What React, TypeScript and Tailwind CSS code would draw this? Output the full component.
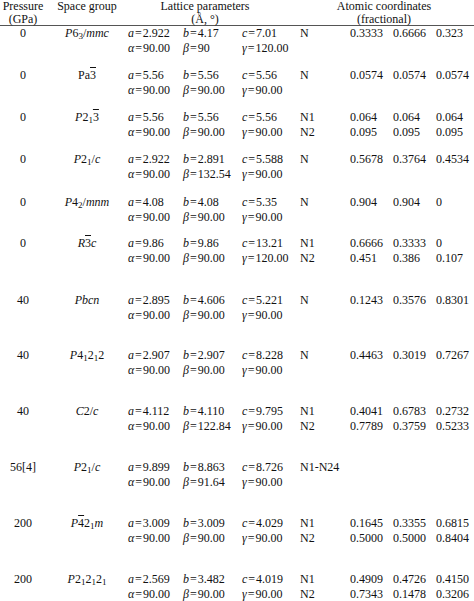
import React from "react";

type Entry = {
  gap: string;
  pressure: string;
  group: React.ReactNode;
  a: string;
  b: string;
  c: string;
  alpha: string;
  beta: string;
  gamma: string;
  atoms: { label: string; xyz?: string[] }[];
};

const I = ({ children }: { children: React.ReactNode }) => <i>{children}</i>;

// lattice parameter like a=2.922, symbol in italics
const Param = ({ sym, val }: { sym: string; val: string }) => (
  <span className="whitespace-nowrap">
    <i>{sym}</i>
    <span className="mx-[1px]">=</span>
    {val}
  </span>
);

const rows: Entry[] = [
  {
    gap: "mt-0",
    pressure: "0",
    group: (
      <>
        <I>P</I>6<sub>3</sub>/<I>mmc</I>
      </>
    ),
    a: "2.922", b: "4.17", c: "7.01",
    alpha: "90.00", beta: "90", gamma: "120.00",
    atoms: [{ label: "N", xyz: ["0.3333", "0.6666", "0.323"] }],
  },
  {
    gap: "mt-[13px]",
    pressure: "0",
    group: (
      <>
        Pa<span className="overline">3</span>
      </>
    ),
    a: "5.56", b: "5.56", c: "5.56",
    alpha: "90.00", beta: "90.00", gamma: "90.00",
    atoms: [{ label: "N", xyz: ["0.0574", "0.0574", "0.0574"] }],
  },
  {
    gap: "mt-[13px]",
    pressure: "0",
    group: (
      <>
        <I>P</I>2<sub>1</sub>
        <span className="overline">3</span>
      </>
    ),
    a: "5.56", b: "5.56", c: "5.56",
    alpha: "90.00", beta: "90.00", gamma: "90.00",
    atoms: [
      { label: "N1", xyz: ["0.064", "0.064", "0.064"] },
      { label: "N2", xyz: ["0.095", "0.095", "0.095"] },
    ],
  },
  {
    gap: "mt-[13px]",
    pressure: "0",
    group: (
      <>
        <I>P</I>2<sub>1</sub>/<I>c</I>
      </>
    ),
    a: "2.922", b: "2.891", c: "5.588",
    alpha: "90.00", beta: "132.54", gamma: "90.00",
    atoms: [{ label: "N", xyz: ["0.5678", "0.3764", "0.4534"] }],
  },
  {
    gap: "mt-[14px]",
    pressure: "0",
    group: (
      <>
        <I>P</I>4<sub>2</sub>/<I>mnm</I>
      </>
    ),
    a: "4.08", b: "4.08", c: "5.35",
    alpha: "90.00", beta: "90.00", gamma: "90.00",
    atoms: [{ label: "N", xyz: ["0.904", "0.904", "0"] }],
  },
  {
    gap: "mt-[12px]",
    pressure: "0",
    group: (
      <>
        <I>R</I>
        <span className="overline">3</span>
        <I>c</I>
      </>
    ),
    a: "9.86", b: "9.86", c: "13.21",
    alpha: "90.00", beta: "90.00", gamma: "120.00",
    atoms: [
      { label: "N1", xyz: ["0.6666", "0.3333", "0"] },
      { label: "N2", xyz: ["0.451", "0.386", "0.107"] },
    ],
  },
  {
    gap: "mt-[28px]",
    pressure: "40",
    group: <I>Pbcn</I>,
    a: "2.895", b: "4.606", c: "5.221",
    alpha: "90.00", beta: "90.00", gamma: "90.00",
    atoms: [{ label: "N", xyz: ["0.1243", "0.3576", "0.8301"] }],
  },
  {
    gap: "mt-[26px]",
    pressure: "40",
    group: (
      <>
        <I>P</I>4<sub>1</sub>2<sub>1</sub>2
      </>
    ),
    a: "2.907", b: "2.907", c: "8.228",
    alpha: "90.00", beta: "90.00", gamma: "90.00",
    atoms: [{ label: "N", xyz: ["0.4463", "0.3019", "0.7267"] }],
  },
  {
    gap: "mt-[27px]",
    pressure: "40",
    group: (
      <>
        <I>C</I>2/<I>c</I>
      </>
    ),
    a: "4.112", b: "4.110", c: "9.795",
    alpha: "90.00", beta: "122.84", gamma: "90.00",
    atoms: [
      { label: "N1", xyz: ["0.4041", "0.6783", "0.2732"] },
      { label: "N2", xyz: ["0.7789", "0.3759", "0.5233"] },
    ],
  },
  {
    gap: "mt-[27px]",
    pressure: "56[4]",
    group: (
      <>
        <I>P</I>2<sub>1</sub>/<I>c</I>
      </>
    ),
    a: "9.899", b: "8.863", c: "8.726",
    alpha: "90.00", beta: "91.64", gamma: "90.00",
    atoms: [{ label: "N1-N24" }],
  },
  {
    gap: "mt-[27px]",
    pressure: "200",
    group: (
      <>
        <I>P</I>
        <span className="overline">4</span>2<sub>1</sub>
        <I>m</I>
      </>
    ),
    a: "3.009", b: "3.009", c: "4.029",
    alpha: "90.00", beta: "90.00", gamma: "90.00",
    atoms: [
      { label: "N1", xyz: ["0.1645", "0.3355", "0.6815"] },
      { label: "N2", xyz: ["0.5000", "0.5000", "0.8404"] },
    ],
  },
  {
    gap: "mt-[27px]",
    pressure: "200",
    group: (
      <>
        <I>P</I>2<sub>1</sub>2<sub>1</sub>2<sub>1</sub>
      </>
    ),
    a: "2.569", b: "3.482", c: "4.019",
    alpha: "90.00", beta: "90.00", gamma: "90.00",
    atoms: [
      { label: "N1", xyz: ["0.4909", "0.4726", "0.4150"] },
      { label: "N2", xyz: ["0.7343", "0.1478", "0.3206"] },
    ],
  },
];

const cols = "grid grid-cols-[46px_82px_55px_59px_58px_50px_43px_43px_1fr]";

const AtomCells = ({ atom }: { atom?: { label: string; xyz?: string[] } }) => (
  <>
    <div className="whitespace-nowrap">{atom?.label}</div>
    <div>{atom?.xyz?.[0]}</div>
    <div>{atom?.xyz?.[1]}</div>
    <div>{atom?.xyz?.[2]}</div>
  </>
);

export default function App() {
  return (
    <div className="w-[474px] h-[601px] overflow-hidden bg-white text-[#111] font-['Liberation_Serif',serif] text-[12px]">
      {/* header */}
      <div className={`${cols} h-[25px] leading-[12.5px]`}>
        <div className="text-center whitespace-nowrap">
          Pressure
          <br />
          (GPa)
        </div>
        <div className="text-center whitespace-nowrap">Space group</div>
        <div className="col-span-3 text-center pr-[18px] whitespace-nowrap">
          Lattice parameters
          <br />
          (Å, °)
        </div>
        <div className="col-span-4 text-center pr-[6px] whitespace-nowrap">
          Atomic coordinates
          <br />
          (fractional)
        </div>
      </div>
      <div className="h-px bg-[#555]" />

      {rows.map((r, i) => (
        <div key={i} className={`${cols} ${r.gap} leading-[14.5px]`}>
          <div className="text-center">{r.pressure}</div>
          <div className="text-center whitespace-nowrap">{r.group}</div>
          <Param sym="a" val={r.a} />
          <Param sym="b" val={r.b} />
          <Param sym="c" val={r.c} />
          <AtomCells atom={r.atoms[0]} />

          <div />
          <div />
          <Param sym="α" val={r.alpha} />
          <Param sym="β" val={r.beta} />
          <Param sym="γ" val={r.gamma} />
          <AtomCells atom={r.atoms[1]} />
        </div>
      ))}
    </div>
  );
}
